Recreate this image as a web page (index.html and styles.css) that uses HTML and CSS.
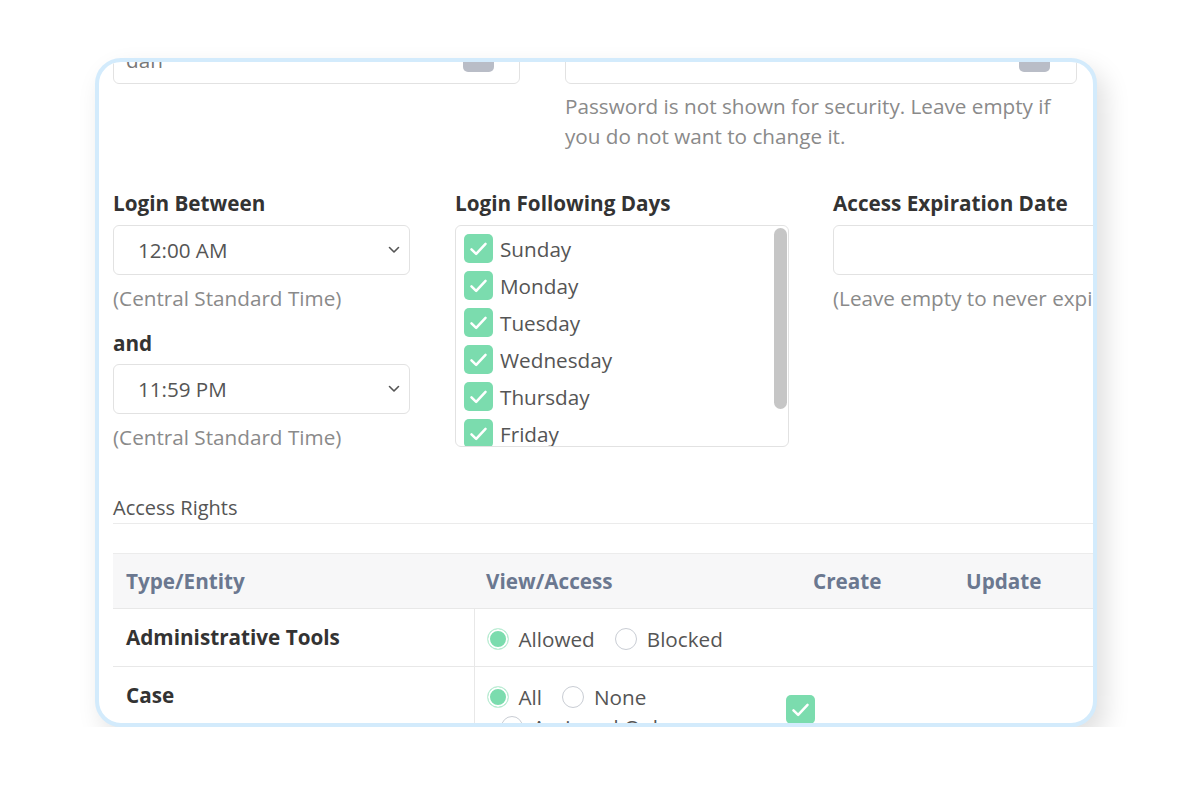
FILE: index.html
```html
<!DOCTYPE html>
<html lang="en">
<head>
<link rel="stylesheet" href="styles.css">
</head>
<body>
  <div class="card">
    <div class="form">
      <div class="row top-row">
        <div class="field user-field">
          <div class="input">
            <span class="input-text">dan</span>
            <span class="input-btn"></span>
          </div>
        </div>
        <div class="field pass-field">
          <div class="input">
            <span class="input-text"></span>
            <span class="input-btn"></span>
          </div>
          <p class="help">Password is not shown for security. Leave empty if you do not want to change it.</p>
        </div>
      </div>

      <div class="row times-row">
        <div class="field time-field">
          <label class="label">Login Between</label>
          <div class="select">
            <span>12:00 AM</span>
            <svg class="chevron" viewBox="0 0 12 8"><path d="M1.5 1.5 6 6l4.5-4.5" fill="none" stroke="#555" stroke-width="1.6" stroke-linecap="round" stroke-linejoin="round"/></svg>
          </div>
          <p class="help short">(Central Standard Time)</p>
          <label class="label and-label">and</label>
          <div class="select">
            <span>11:59 PM</span>
            <svg class="chevron" viewBox="0 0 12 8"><path d="M1.5 1.5 6 6l4.5-4.5" fill="none" stroke="#555" stroke-width="1.6" stroke-linecap="round" stroke-linejoin="round"/></svg>
          </div>
          <p class="help short">(Central Standard Time)</p>
        </div>

        <div class="field days-field">
          <label class="label">Login Following Days</label>
          <div class="listbox">
            <div class="day"><span class="check"><svg viewBox="0 0 16 16"><path d="M3.5 8.5l3 3 6-6.5" fill="none" stroke="#fff" stroke-width="1.6" stroke-linecap="round" stroke-linejoin="round"/></svg></span>Sunday</div>
            <div class="day"><span class="check"><svg viewBox="0 0 16 16"><path d="M3.5 8.5l3 3 6-6.5" fill="none" stroke="#fff" stroke-width="1.6" stroke-linecap="round" stroke-linejoin="round"/></svg></span>Monday</div>
            <div class="day"><span class="check"><svg viewBox="0 0 16 16"><path d="M3.5 8.5l3 3 6-6.5" fill="none" stroke="#fff" stroke-width="1.6" stroke-linecap="round" stroke-linejoin="round"/></svg></span>Tuesday</div>
            <div class="day"><span class="check"><svg viewBox="0 0 16 16"><path d="M3.5 8.5l3 3 6-6.5" fill="none" stroke="#fff" stroke-width="1.6" stroke-linecap="round" stroke-linejoin="round"/></svg></span>Wednesday</div>
            <div class="day"><span class="check"><svg viewBox="0 0 16 16"><path d="M3.5 8.5l3 3 6-6.5" fill="none" stroke="#fff" stroke-width="1.6" stroke-linecap="round" stroke-linejoin="round"/></svg></span>Thursday</div>
            <div class="day"><span class="check"><svg viewBox="0 0 16 16"><path d="M3.5 8.5l3 3 6-6.5" fill="none" stroke="#fff" stroke-width="1.6" stroke-linecap="round" stroke-linejoin="round"/></svg></span>Friday</div>
            <div class="day"><span class="check"><svg viewBox="0 0 16 16"><path d="M3.5 8.5l3 3 6-6.5" fill="none" stroke="#fff" stroke-width="1.6" stroke-linecap="round" stroke-linejoin="round"/></svg></span>Saturday</div>
            <span class="scroll-thumb"></span>
          </div>
        </div>

        <div class="field expire-field">
          <label class="label">Access Expiration Date</label>
          <div class="input"></div>
          <p class="help short">(Leave empty to never expire)</p>
        </div>
      </div>

      <h4 class="section-title">Access Rights</h4>

      <table class="rights">
        <colgroup>
          <col class="w-type">
          <col class="w-view">
          <col class="w-create">
          <col class="w-update">
        </colgroup>
        <thead>
          <tr>
            <th class="col-type">Type/Entity</th>
            <th class="col-view">View/Access</th>
            <th class="col-create">Create</th>
            <th class="col-update">Update</th>
          </tr>
        </thead>
        <tbody>
          <tr>
            <td class="col-type">Administrative Tools</td>
            <td class="col-view">
              <div class="radios">
                <span class="radio on"></span><span class="radio-label">Allowed</span>
                <span class="radio"></span><span class="radio-label">Blocked</span>
              </div>
            </td>
            <td class="col-create"></td>
            <td class="col-update"></td>
          </tr>
          <tr>
            <td class="col-type">Case</td>
            <td class="col-view">
              <div class="radios">
                <span class="radio on"></span><span class="radio-label">All</span>
                <span class="radio"></span><span class="radio-label">None</span>
              </div>
              <div class="radios second">
                <span class="radio"></span><span class="radio-label">Assigned Only</span>
              </div>
            </td>
            <td class="col-create">
              <span class="check cell-check"><svg viewBox="0 0 16 16"><path d="M3.5 8.5l3 3 6-6.5" fill="none" stroke="#fff" stroke-width="1.6" stroke-linecap="round" stroke-linejoin="round"/></svg></span>
            </td>
            <td class="col-update"></td>
          </tr>
        </tbody>
      </table>
    </div>
  </div>
</body>
</html>
```

FILE: styles.css
```css
body {
  margin: 0;
  background: #fff;
  font-family: "Open Sans", "Liberation Sans", sans-serif;
  color: #333;
}

.card {
  margin: 58px 0 0 95px;
  width: 994px;
  height: 661px;
  border: 4px solid #d3ebfc;
  border-radius: 26px;
  overflow: hidden;
  background: #fff;
  box-shadow: 8px 12px 26px rgba(0,0,0,0.13);
}

.form {
  width: 1200px;
  margin-top: -28px;
  padding-left: 14px;
}

.row {
  display: flex;
  align-items: flex-start;
}

.top-row {
  gap: 45px;
}

.user-field {
  width: 407px;
}

.pass-field {
  width: 512px;
}

.input {
  height: 48px;
  border: 1px solid #e2e2e2;
  border-radius: 6px;
  display: flex;
  align-items: center;
  justify-content: space-between;
  padding: 0 25px 0 12px;
  font-size: 20.7px;
  color: #777;
}

.input-text {
  margin-top: 2px;
}

.input-btn {
  align-self: flex-end;
  width: 31px;
  height: 30px;
  margin-bottom: 11px;
  background: #b9bdc7;
  border-radius: 5px;
}

.pass-field .input-btn {
  margin-right: 1px;
}

.help {
  margin: 7px 0 0;
  font-size: 20.7px;
  line-height: 30px;
  color: #8a8a8a;
}

.help.short {
  margin-top: 8px;
}

.times-row {
  margin-top: 39px;
  gap: 45px;
}

.time-field {
  width: 297px;
}

.days-field {
  width: 334px;
}

.expire-field {
  width: 320px;
  margin-left: -1px;
}

.expire-field .input {
  padding: 0;
}

.label {
  display: block;
  font-size: 20.7px;
  font-weight: 700;
  line-height: 26px;
  color: #333;
  margin-bottom: 9px;
}

.and-label {
  margin-top: 17px;
  margin-bottom: 8px;
}

.select {
  height: 48px;
  border: 1px solid #e2e2e2;
  border-radius: 6px;
  display: flex;
  align-items: center;
  justify-content: space-between;
  padding: 0 9px 0 24px;
  font-size: 20.6px;
  color: #555;
}

.chevron {
  width: 12px;
  height: 8px;
}

.listbox {
  position: relative;
  height: 222px;
  border: 1px solid #e2e2e2;
  border-radius: 6px;
  overflow: hidden;
  padding: 4px 0 0 8px;
  box-sizing: border-box;
}

.day {
  display: flex;
  align-items: center;
  gap: 7px;
  height: 37px;
  font-size: 20.7px;
  color: #555;
}

.check {
  display: inline-flex;
  align-items: center;
  justify-content: center;
  width: 29px;
  height: 29px;
  border-radius: 5px;
  background: #7bdcae;
  flex-shrink: 0;
}

.check svg {
  width: 25px;
  height: 25px;
}

.scroll-thumb {
  position: absolute;
  right: 1px;
  top: 2px;
  width: 13px;
  height: 181px;
  border-radius: 7px;
  background: #c6c6c6;
}

.section-title {
  margin: 41px 0 0;
  width: 1000px;
  font-size: 20px;
  font-weight: 400;
  line-height: 30px;
  color: #555;
  border-bottom: 1px solid #ebebeb;
}

.rights {
  margin-top: 29px;
  width: 1000px;
  border-collapse: collapse;
  table-layout: fixed;
  font-size: 20.7px;
}

.w-type {
  width: 361px;
}

.w-view {
  width: 327px;
}

.w-create {
  width: 153px;
}

.w-update {
  width: 159px;
}

.rights th {
  height: 54px;
  padding: 0 12px;
  background: #f7f7f8;
  border-top: 1px solid #ececec;
  text-align: left;
  font-weight: 700;
  color: #6b7890;
}

.rights td {
  padding: 15px 12px 14px;
  vertical-align: top;
  border-top: 1px solid #e8e8e8;
  line-height: 26px;
}

.rights td.col-type {
  font-weight: 700;
  color: #333;
  padding-left: 13px;
  border-right: 1px solid #e8e8e8;
}

.rights th.col-type {
  padding-left: 13px;
}

.rights td.col-create {
  padding-left: 0;
}

.radios {
  display: flex;
  align-items: center;
  color: #555;
  line-height: 26px;
  padding-top: 2px;
  white-space: nowrap;
}

.radios.second {
  padding-left: 14px;
  margin-top: 2px;
}

.radio {
  width: 20px;
  height: 20px;
  border-radius: 50%;
  border: 1.5px solid #c9cdd4;
  background: #fff;
  margin-right: 10px;
  flex-shrink: 0;
}

.radio.on {
  border: 1.5px solid #c4efd9;
  background: #7bdcae;
  box-shadow: inset 0 0 0 2px #fff;
}

.radio-label {
  margin-right: 20px;
}

.cell-check {
  margin-left: -15px;
  margin-top: 13px;
}
```
